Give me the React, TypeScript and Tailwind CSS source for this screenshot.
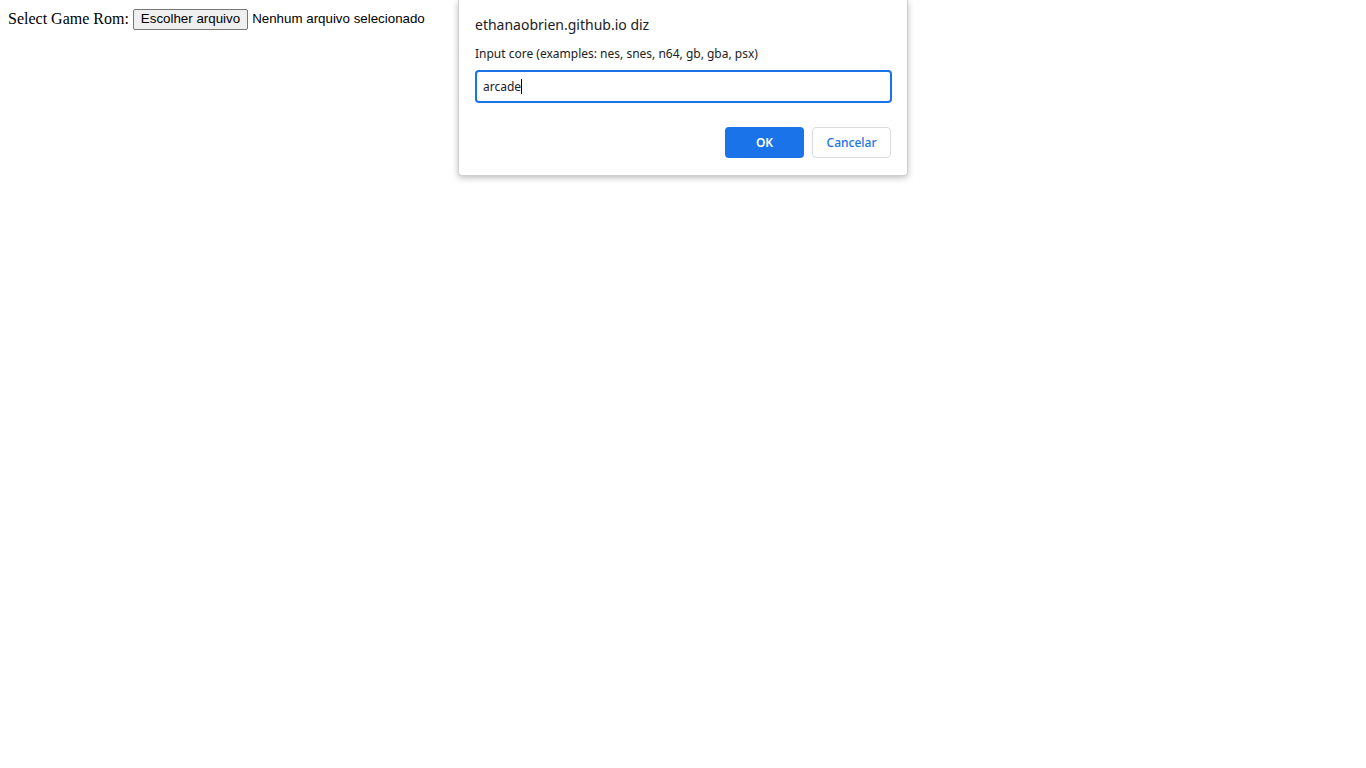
export default function App() {
  return (
    <div className="relative min-h-[768px] bg-white">
      <div className="flex items-center px-2 pt-[7px] text-[16px] text-black font-['Liberation_Serif',serif]">
        <span>Select Game Rom:</span>
        <span className="ml-[4px] flex items-center font-['Liberation_Sans',sans-serif] text-[13.33px]">
          <span className="h-[21px] px-[7px] flex items-center rounded-[2px] border border-[#767676] bg-[#efefef]">
            Escolher arquivo
          </span>
          <span className="ml-[4px]">Nenhum arquivo selecionado</span>
        </span>
      </div>

      <div className="absolute left-[458px] top-0 w-[450px] h-[176px] rounded-b-[4px] bg-white border border-t-0 border-[#d0d0d0] shadow-[0_2px_6px_rgba(0,0,0,0.25)] px-4 font-['Noto_Sans','Open_Sans',sans-serif] text-[#202124]">
        <div className="pt-[14px] text-[14px] leading-[22px]">ethanaobrien.github.io diz</div>
        <div className="mt-[10px] text-[12px] leading-[16px] text-[#202124]">Input core (examples: nes, snes, n64, gb, gba, psx)</div>
        <div className="mt-[8px] h-[33px] w-[417px] rounded-[4px] border-2 border-[#1a73e8] flex items-center pl-[6px] text-[12px]">
          arcade<span className="w-px h-[15px] bg-black" />
        </div>
        <div className="mt-[24px] flex justify-end gap-2 text-[12px]">
          <button className="w-[79px] h-[31px] rounded-[4px] bg-[#1a73e8] text-white font-semibold">OK</button>
          <button className="w-[79px] h-[31px] rounded-[4px] border border-[#dadce0] bg-white text-[#1a73e8] font-medium">Cancelar</button>
        </div>
      </div>
    </div>
  );
}
